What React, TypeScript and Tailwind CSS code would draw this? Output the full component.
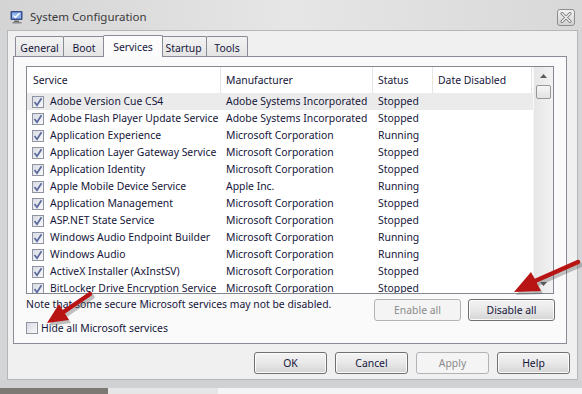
import React from "react";

const rows: [string, string, string][] = [
  ["Adobe Version Cue CS4", "Adobe Systems Incorporated", "Stopped"],
  ["Adobe Flash Player Update Service", "Adobe Systems Incorporated", "Stopped"],
  ["Application Experience", "Microsoft Corporation", "Running"],
  ["Application Layer Gateway Service", "Microsoft Corporation", "Stopped"],
  ["Application Identity", "Microsoft Corporation", "Stopped"],
  ["Apple Mobile Device Service", "Apple Inc.", "Running"],
  ["Application Management", "Microsoft Corporation", "Stopped"],
  ["ASP.NET State Service", "Microsoft Corporation", "Stopped"],
  ["Windows Audio Endpoint Builder", "Microsoft Corporation", "Running"],
  ["Windows Audio", "Microsoft Corporation", "Running"],
  ["ActiveX Installer (AxInstSV)", "Microsoft Corporation", "Stopped"],
  ["BitLocker Drive Encryption Service", "Microsoft Corporation", "Stopped"],
];

function CheckBox({ checked }: { checked: boolean }) {
  return (
    <span className="w-[12px] h-[12px] shrink-0 border border-[#9094a0] bg-gradient-to-br from-[#d9dce4] to-[#f7f8fa] flex items-center justify-center">
      {checked && (
        <svg width="10" height="10" viewBox="0 0 10 10">
          <path d="M1.5 5 L4 8.3 L8.5 1.2" fill="none" stroke="#5b6a9c" strokeWidth="1.7" />
        </svg>
      )}
    </span>
  );
}

function Btn({ label, disabled, w = "w-[73px]", h = "h-[22px]" }: { label: string; disabled?: boolean; w?: string; h?: string }) {
  return (
    <div
      className={
        disabled
          ? `${w} ${h} rounded-[3px] border border-[#b0b4b8] bg-[#f4f4f4] text-[#8a8a8a] flex items-center justify-center`
          : `${w} ${h} rounded-[3px] border border-[#707070] bg-gradient-to-b from-[#f4f4f4] via-[#e8e8e8] to-[#d4d4d4] text-[#15153a] flex items-center justify-center shadow-[inset_0_0_0_1px_#fbfbfb]`
      }
    >
      {label}
    </div>
  );
}

function Tab({ label, w, selected }: { label: string; w: string; selected?: boolean }) {
  if (selected) {
    return (
      <div
        className={`${w} h-[22px] -mx-[2px] -mb-px relative z-10 border border-b-0 border-[#898c95] bg-[#fcfcfc] flex items-center justify-center pt-[1px] text-[#15153a] rounded-t-[2px]`}
      >
        {label}
      </div>
    );
  }
  return (
    <div
      className={`${w} h-[20px] -ml-px first:ml-0 border border-b-0 border-[#898c95] bg-gradient-to-b from-[#f3f3f3] to-[#e4e4e4] flex items-center justify-center pt-[3px] text-[#15153a] rounded-t-[2px]`}
    >
      {label}
    </div>
  );
}

export default function App() {
  return (
    <div className="w-[582px] h-[394px] relative overflow-hidden bg-[#d4d5d6] font-['Noto_Sans',sans-serif] text-[10.4px] leading-none">
      {/* Title bar */}
      <div className="h-[30px] flex items-center pt-[4px] pl-[10px] pr-[7px] bg-gradient-to-r from-[#d4d4d4] via-[#e6e6e6] to-[#d8d8d8]">
        <svg width="14" height="14" viewBox="0 0 14 14">
          <rect x="0.5" y="1" width="12" height="9" rx="1" fill="#3a4f8c" />
          <rect x="2" y="2.5" width="9" height="6" fill="#8fb4ef" />
          <path d="M3.5 5.5 L5.5 7.5 L9.5 3" fill="none" stroke="#ffffff" strokeWidth="1.3" />
          <rect x="4" y="10.5" width="5" height="1.5" fill="#6a6a6a" />
          <rect x="2.5" y="12" width="9" height="1.5" fill="#8a8a8a" />
        </svg>
        <span className="ml-[6px] text-[11.5px] text-[#3a3a3a]">System Configuration</span>
        <div className="ml-auto w-[18px] h-[17px] rounded-[3px] border border-[#8c8c8c] bg-gradient-to-b from-[#f2f2f2] to-[#d2d2d2] flex items-center justify-center">
          <svg width="12" height="11" viewBox="0 0 12 11">
            <path d="M2 1.5 L10 9.5 M10 1.5 L2 9.5" stroke="#7a7a7a" strokeWidth="3" strokeLinecap="round" />
            <path d="M2 1.5 L10 9.5 M10 1.5 L2 9.5" stroke="#f4f4f4" strokeWidth="1.3" strokeLinecap="round" />
          </svg>
        </div>
      </div>

      {/* Body with frame */}
      <div className="flex">
        <div className="w-[7px]" />
        <div className="w-[571px] h-[350px] border border-[#b4b6b8] bg-[#f0f0f0] flex flex-col">
          {/* Tabs */}
          <div className="h-[25px] pl-[7px] flex items-end">
            <Tab label="General" w="w-[49px]" />
            <Tab label="Boot" w="w-[42px]" />
            <Tab label="Services" w="w-[60px]" selected />
            <Tab label="Startup" w="w-[47px]" />
            <Tab label="Tools" w="w-[42px]" />
          </div>
          {/* Panel */}
          <div className="ml-[5px] w-[554px] h-[288px] border border-[#898c95] bg-[#fafafa] pt-[9px] pl-[12px] flex flex-col">
            {/* List */}
            <div className="w-[528px] h-[228px] border border-[#828790] bg-white flex overflow-hidden">
              <div className="w-[506px] flex flex-col overflow-hidden">
                <div className="h-[26px] shrink-0 flex text-[#15153a]">
                  <div className="w-[194px] border-r border-[#e3e4e6] pl-[6px] flex items-center">Service</div>
                  <div className="w-[152px] border-r border-[#e3e4e6] pl-[5px] flex items-center">Manufacturer</div>
                  <div className="w-[60px] border-r border-[#e3e4e6] pl-[5px] flex items-center">Status</div>
                  <div className="w-[99px] border-r border-[#e3e4e6] pl-[5px] flex items-center">Date Disabled</div>
                </div>
                {rows.map((r, i) => (
                  <div
                    key={r[0]}
                    className={`h-[17px] shrink-0 flex items-center text-[#15153a] ${i === 0 ? "bg-[#ebebeb]" : ""}`}
                  >
                    <div className="w-[194px] pl-[5px] flex items-center gap-[6px] whitespace-nowrap">
                      <CheckBox checked />
                      <span>{r[0]}</span>
                    </div>
                    <div className="w-[152px] pl-[5px] whitespace-nowrap">{r[1]}</div>
                    <div className="w-[60px] pl-[5px]">{r[2]}</div>
                  </div>
                ))}
              </div>
              {/* Scrollbar */}
              <div className="w-[20px] h-full border-l border-[#f7f7f7] bg-gradient-to-r from-[#e6e6e6] to-[#f2f2f2] flex flex-col items-center">
                <div className="h-[18px] flex items-center justify-center">
                  <svg width="7" height="4" viewBox="0 0 7 4">
                    <path d="M0 4 L3.5 0 L7 4 Z" fill="#5a5a5a" />
                  </svg>
                </div>
                <div className="w-[15px] h-[14px] rounded-[2px] border border-[#979797] bg-gradient-to-b from-[#f6f6f6] to-[#e2e2e2]" />
                <div className="flex-1" />
                <div className="h-[18px] flex items-center justify-center">
                  <svg width="7" height="4" viewBox="0 0 7 4">
                    <path d="M0 0 L3.5 4 L7 0 Z" fill="#5a5a5a" />
                  </svg>
                </div>
              </div>
            </div>
            {/* Bottom of panel */}
            <div className="w-[529px] flex justify-between text-[#15153a]">
              <div className="flex flex-col pt-[2px]">
                <div className="h-[16px] flex items-center whitespace-nowrap">Note that some secure Microsoft services may not be disabled.</div>
                <div className="mt-[9px] h-[14px] flex items-center gap-[3px]">
                  <CheckBox checked={false} />
                  <span>Hide all Microsoft services</span>
                </div>
              </div>
              <div className="flex gap-[7px] mt-[5px]">
                <Btn label="Enable all" disabled w="w-[87px]" />
                <Btn label="Disable all" w="w-[87px]" />
              </div>
            </div>
          </div>
          {/* Dialog buttons */}
          <div className="mt-[8px] flex justify-end gap-[8px] pr-[7px]">
            <Btn label="OK" h="h-[22px]" />
            <Btn label="Cancel" h="h-[22px]" />
            <Btn label="Apply" disabled h="h-[22px]" />
            <Btn label="Help" h="h-[22px]" />
          </div>
        </div>
      </div>
      {/* bottom frame & desktop strip */}
      <div className="h-[8px] bg-[#d0d1d2]" />
      <div className="h-[6px] flex">
        <div className="w-[108px] bg-[#7c7873]" />
        <div className="w-[110px] bg-[#e6e6e6]" />
        <div className="flex-1 bg-[#f4f4f4]" />
      </div>

      {/* Red arrows overlay */}
      <svg className="absolute inset-0 pointer-events-none" width="582" height="394" viewBox="0 0 582 394">
        <g opacity="0.35" transform="translate(2 3)">
          <path d="M578 262 L535 281" stroke="#555" strokeWidth="5" strokeLinecap="round" />
          <path d="M514 292 L531 272 L541 291 Z" fill="#555" />
          <path d="M90 294 L62 313" stroke="#555" strokeWidth="5" strokeLinecap="round" />
          <path d="M47 323 L59 304 L69 320 Z" fill="#555" />
        </g>
        <path d="M578 262 L535 281" stroke="#b81414" strokeWidth="4.5" strokeLinecap="round" />
        <path d="M514 292 L531 272 L541 291 Z" fill="#b81414" />
        <path d="M90 294 L62 313" stroke="#b81414" strokeWidth="4.5" strokeLinecap="round" />
        <path d="M47 323 L59 304 L69 320 Z" fill="#b81414" />
      </svg>
    </div>
  );
}
